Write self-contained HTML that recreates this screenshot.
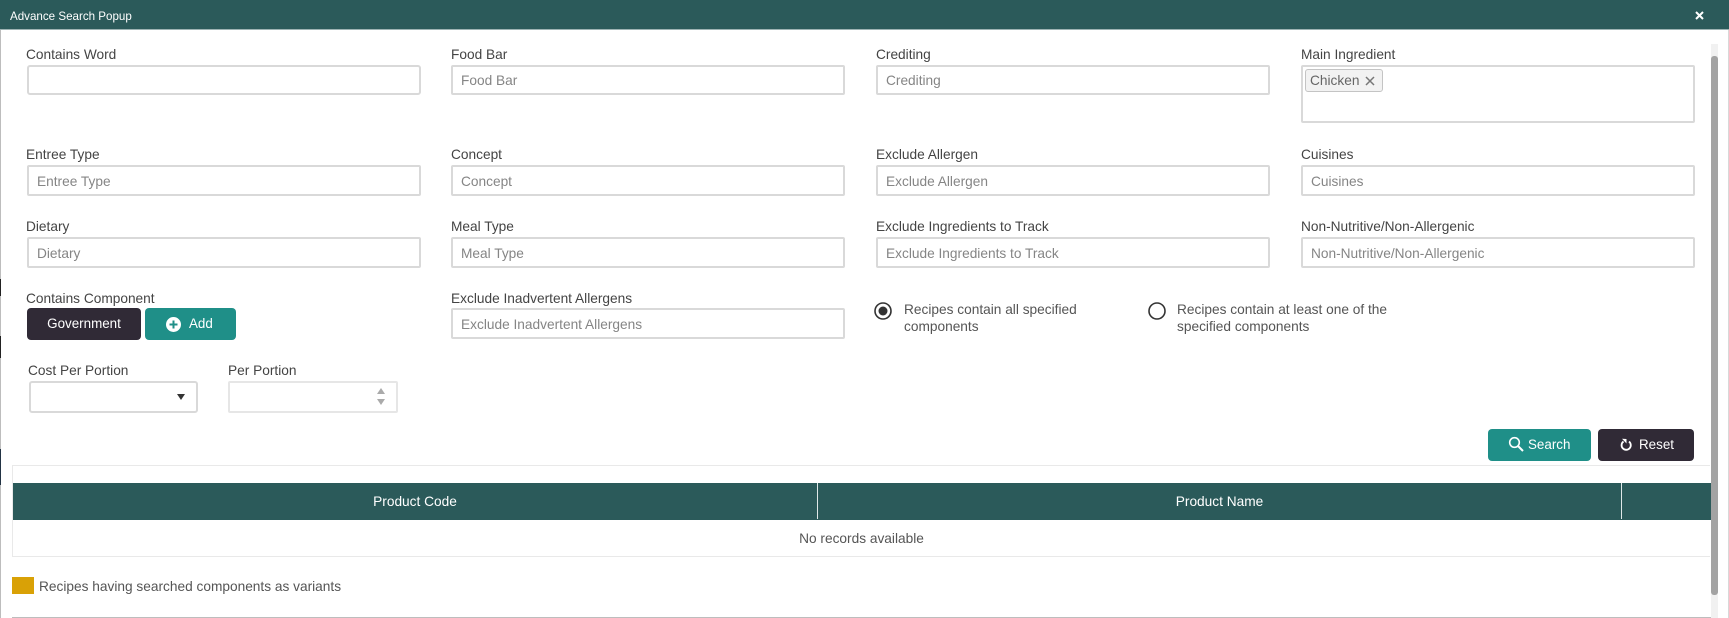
<!DOCTYPE html>
<html><head><meta charset="utf-8"><style>
html,body{margin:0;padding:0;background:#fff}
body{width:1729px;height:618px;position:relative;overflow:hidden;font-family:"Liberation Sans",sans-serif;font-size:13.7px;color:#333}
div,span{position:absolute;box-sizing:border-box;white-space:nowrap}
.l{line-height:18px;color:#444}
.i{border:2px solid #d9d9d9;background:#fff;height:31px;width:394px;color:#858585;line-height:29px;padding-left:8px;border-radius:2px}
.b{border-radius:4px;color:#fff;text-align:center;height:32px;line-height:32px;font-size:13.4px}
</style></head><body>
<div style="left:0;top:0;width:1729px;height:30px;background:#2b5a5a;border-bottom:1px solid #9db3b3"></div>
<div style="left:10px;top:9px;color:#fff;font-size:11.6px;line-height:15px">Advance Search Popup</div>
<svg style="position:absolute;left:1695px;top:11px" width="9" height="9" viewBox="0 0 9 9"><path d="M1 1L8 8M8 1L1 8" stroke="#fff" stroke-width="2"/></svg>
<div style="left:0;top:30px;width:1px;height:588px;background:#bdbdbd"></div>
<div style="left:0;top:279px;width:1px;height:17px;background:#222"></div>
<div style="left:0;top:336px;width:1px;height:22px;background:#222"></div>
<div style="left:0;top:449px;width:1px;height:36px;background:#234"></div>
<div style="left:1728px;top:30px;width:1px;height:588px;background:#d8d8d8"></div>

<div class="l" style="left:26px;top:46px">Contains Word</div><div class="i" style="left:27px;top:65px;height:30px;border-radius:3px"></div>
<div class="l" style="left:451px;top:46px">Food Bar</div><div class="i" style="left:451px;top:65px;height:30px;line-height:27px">Food Bar</div>
<div class="l" style="left:876px;top:46px">Crediting</div><div class="i" style="left:876px;top:65px;height:30px;line-height:27px">Crediting</div>
<div class="l" style="left:1301px;top:46px">Main Ingredient</div><div class="i" style="left:1301px;top:65px;height:58px"></div>
<div style="left:1305px;top:69px;width:78px;height:23px;background:#f2f2f2;border:1px solid #c4c4c4;border-radius:3px;line-height:22px;padding-left:4px;color:#666">Chicken</div>
<svg style="position:absolute;left:1365px;top:76px" width="10" height="10" viewBox="0 0 10 10"><path d="M1 1L9 9M9 1L1 9" stroke="#777" stroke-width="1.5"/></svg>

<div class="l" style="left:26px;top:146px">Entree Type</div><div class="i" style="left:27px;top:165px">Entree Type</div>
<div class="l" style="left:451px;top:146px">Concept</div><div class="i" style="left:451px;top:165px">Concept</div>
<div class="l" style="left:876px;top:146px">Exclude Allergen</div><div class="i" style="left:876px;top:165px">Exclude Allergen</div>
<div class="l" style="left:1301px;top:146px">Cuisines</div><div class="i" style="left:1301px;top:165px">Cuisines</div>

<div class="l" style="left:26px;top:218px">Dietary</div><div class="i" style="left:27px;top:237px">Dietary</div>
<div class="l" style="left:451px;top:218px">Meal Type</div><div class="i" style="left:451px;top:237px">Meal Type</div>
<div class="l" style="left:876px;top:218px">Exclude Ingredients to Track</div><div class="i" style="left:876px;top:237px">Exclude Ingredients to Track</div>
<div class="l" style="left:1301px;top:218px">Non-Nutritive/Non-Allergenic</div><div class="i" style="left:1301px;top:237px">Non-Nutritive/Non-Allergenic</div>

<div class="l" style="left:26px;top:290px">Contains Component</div>
<div class="b" style="left:27px;top:308px;width:114px;background:#302a36">Government</div>
<div class="b" style="left:145px;top:308px;width:91px;background:#1f8f88;text-align:left;padding-left:44px">Add</div>
<svg style="position:absolute;left:166px;top:317px" width="15" height="15" viewBox="0 0 15 15"><circle cx="7.5" cy="7.5" r="7.5" fill="#fff"/><path d="M7.5 3.5V11.5M3.5 7.5H11.5" stroke="#1f8f88" stroke-width="2"/></svg>
<div class="l" style="left:451px;top:290px">Exclude Inadvertent Allergens</div><div class="i" style="left:451px;top:308px">Exclude Inadvertent Allergens</div>

<svg style="position:absolute;left:874px;top:302px" width="18" height="18" viewBox="0 0 18 18"><circle cx="9" cy="9" r="8" fill="#fff" stroke="#333" stroke-width="1.6"/><circle cx="9" cy="9" r="4.5" fill="#333"/></svg>
<div class="l" style="left:904px;top:301px;line-height:17px;color:#555">Recipes contain all specified<br>components</div>
<svg style="position:absolute;left:1148px;top:302px" width="18" height="18" viewBox="0 0 18 18"><circle cx="9" cy="9" r="8" fill="#fff" stroke="#333" stroke-width="1.6"/></svg>
<div class="l" style="left:1177px;top:301px;line-height:17px;color:#555">Recipes contain at least one of the<br>specified components</div>

<div class="l" style="left:28px;top:362px">Cost Per Portion</div>
<div class="i" style="left:29px;top:381px;width:169px;height:32px;border-radius:3px"></div>
<div style="left:177px;top:394px;width:0;height:0;border-left:4px solid transparent;border-right:4px solid transparent;border-top:6px solid #333"></div>
<div class="l" style="left:228px;top:362px">Per Portion</div>
<div class="i" style="left:228px;top:381px;width:170px;height:32px;border-color:#e6e6e6"></div>
<div style="left:377px;top:388px;width:0;height:0;border-left:4px solid transparent;border-right:4px solid transparent;border-bottom:6px solid #aaa"></div>
<div style="left:377px;top:399px;width:0;height:0;border-left:4px solid transparent;border-right:4px solid transparent;border-top:6px solid #aaa"></div>

<div class="b" style="left:1488px;top:429px;width:103px;background:#1f8f88;text-align:left;padding-left:40px">Search</div>
<svg style="position:absolute;left:1508px;top:436px" width="16" height="16" viewBox="0 0 16 16"><circle cx="6.5" cy="6.5" r="4.8" fill="none" stroke="#fff" stroke-width="1.6"/><path d="M10 10L15 15" stroke="#fff" stroke-width="2"/></svg>
<div class="b" style="left:1598px;top:429px;width:96px;background:#302a36;text-align:left;padding-left:41px">Reset</div>
<svg style="position:absolute;left:1620px;top:438px" width="13" height="14" viewBox="0 0 13 14"><path d="M3.5 3.5A4.6 4.6 0 1 0 9 3.6" fill="none" stroke="#fff" stroke-width="1.8"/><path d="M2 .8L6.5 1V5.5Z" fill="#fff"/></svg>

<div style="left:12px;top:465px;width:1698px;height:92px;border:1px solid #e9e9e9;border-right:0"></div>
<div style="left:13px;top:483px;width:1698px;height:37px;background:#2b5a5a"></div>
<div style="left:817px;top:483px;width:1px;height:36px;background:#dfe8e8"></div>
<div style="left:1621px;top:483px;width:1px;height:36px;background:#dfe8e8"></div>
<div style="left:13px;top:484px;width:804px;height:36px;line-height:36px;text-align:center;color:#fff">Product Code</div>
<div style="left:818px;top:484px;width:803px;height:36px;line-height:36px;text-align:center;color:#fff">Product Name</div>
<div style="left:13px;top:520px;width:1697px;height:37px;line-height:37px;text-align:center;color:#555">No records available</div>

<div style="left:12px;top:577px;width:22px;height:17px;background:#d9a106"></div>
<div class="l" style="left:39px;top:578px;color:#555">Recipes having searched components as variants</div>
<div style="left:12px;top:617px;width:1699px;height:1px;background:#bdbdbd"></div>

<div style="left:1711px;top:44px;width:7px;height:574px;background:#f1f1f1"></div>
<div style="left:1711px;top:56px;width:7px;height:539px;background:#a3a3a3;border-radius:3px"></div>
</body></html>
